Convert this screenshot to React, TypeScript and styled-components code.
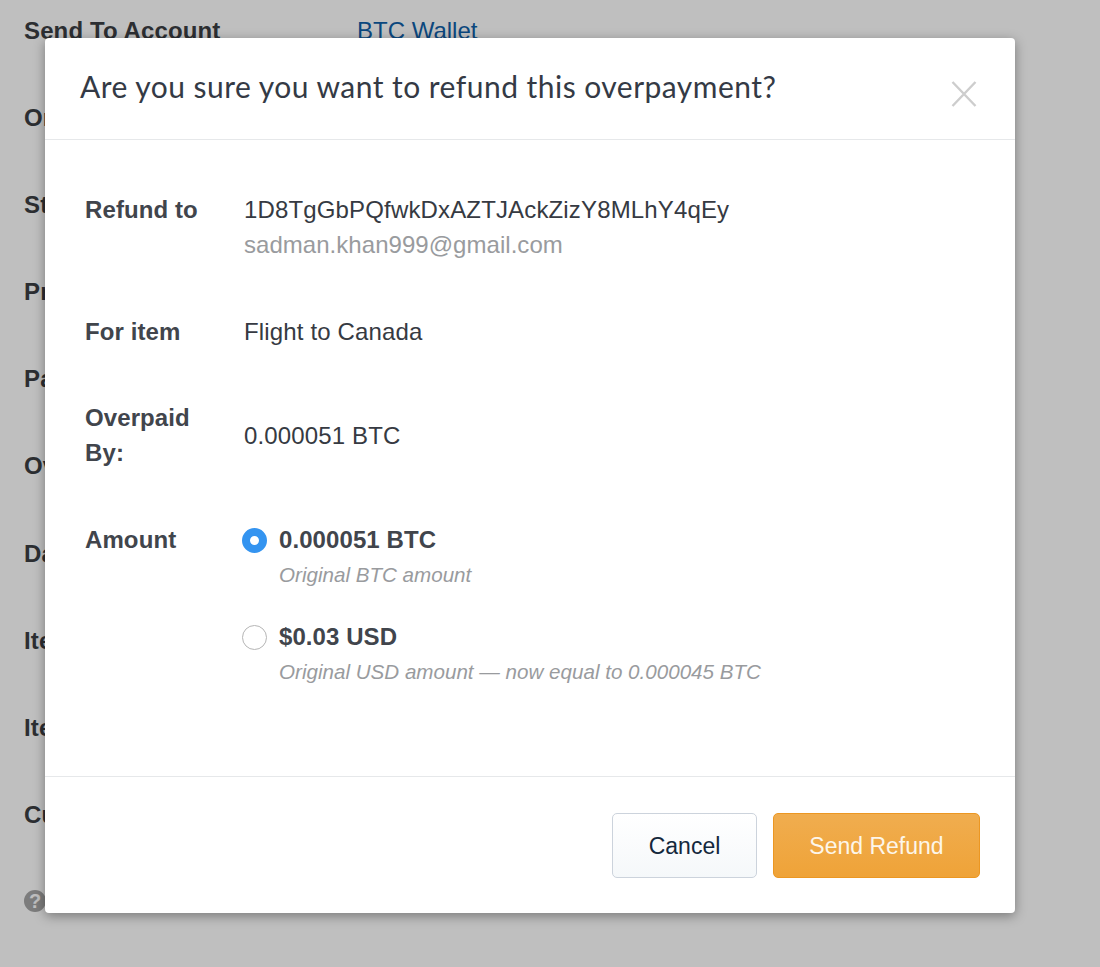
import React from 'react'
import styled, { createGlobalStyle } from 'styled-components'

const GlobalStyle = createGlobalStyle`
  html, body {
    margin: 0;
    padding: 0;
    background: #fff;
    overflow: hidden;
  }
  body {
    font-family: "Liberation Sans", Arial, sans-serif;
  }
`

const Page = styled.div`
  position: relative;
  width: 1100px;
  height: 967px;
  overflow: hidden;
  background: #fff;
`

const DetailList = styled.dl`
  margin: 0;
  padding: 17px 0 0 24px;
  display: flex;
  flex-direction: column;
  gap: 59.1px;
`

const DetailRow = styled.div`
  display: flex;
  height: 28px;
  align-items: center;
  font-size: 24px;
  line-height: 28px;
`

const DetailLabel = styled.dt`
  width: 333px;
  font-weight: 700;
  letter-spacing: 0.12px;
  color: #3b3e43;
`

const DetailValue = styled.dd`
  margin: 0;
  color: #0f5fa8;
`

const HelpRow = styled.div`
  display: flex;
  align-items: center;
  height: 22px;
  margin: 61px 0 0 24px;
`

const HelpIcon = styled.span`
  width: 22px;
  height: 22px;
  border-radius: 50%;
  background: #a6a6a6;
  color: #fff;
  font-size: 20px;
  font-weight: 700;
  line-height: 22px;
  text-align: center;
`

const Overlay = styled.div`
  position: absolute;
  inset: 0;
  background: rgba(0, 0, 0, 0.25);
`

const Modal = styled.div`
  position: absolute;
  left: 45px;
  top: 38px;
  width: 970px;
  height: 875px;
  display: flex;
  flex-direction: column;
  background: #fff;
  border-radius: 4px;
  box-shadow: 0 3px 12px rgba(0, 0, 0, 0.36);
`

const ModalHeader = styled.header`
  flex: none;
  height: 102px;
  box-sizing: border-box;
  border-bottom: 1px solid #e6e8ea;
  padding: 0 35px;
  display: flex;
  justify-content: space-between;
`

const ModalTitle = styled.h2`
  margin: 29px 0 0;
  font-family: "Lato", sans-serif;
  font-size: 30px;
  line-height: 38px;
  font-weight: 400;
  letter-spacing: 0.47px;
  color: #343a45;
`

const CloseButton = styled.button`
  width: 26px;
  height: 26px;
  margin: 43px 3px 0 0;
  padding: 0;
  border: 0;
  background: none;
  display: block;
`

const ModalBody = styled.div`
  flex: 1;
  padding: 52px 40px 0;
  display: flex;
  flex-direction: column;
  gap: 51.5px;
`

const FormRow = styled.div<{ $center?: boolean }>`
  display: grid;
  grid-template-columns: 159px 1fr;
  align-items: ${p => (p.$center ? 'center' : 'start')};
`

const FieldLabel = styled.div`
  max-width: 125px;
  font-size: 24px;
  line-height: 35px;
  font-weight: 700;
  letter-spacing: 0.1px;
  color: #41454c;
`

const FieldValue = styled.div`
  font-size: 24px;
  line-height: 35px;
  letter-spacing: 0.15px;
  color: #363a42;
`

const SubValue = styled.div`
  font-size: 24px;
  line-height: 35px;
  letter-spacing: 0.04px;
  color: #999b9e;
`

const RadioGroup = styled.div`
  display: flex;
  flex-direction: column;
  gap: 30px;
`

const RadioOption = styled.div`
  display: flex;
  gap: 12px;
  margin-left: -2px;
`

const RadioDot = styled.span<{ $checked?: boolean }>`
  flex: none;
  width: 25px;
  height: 25px;
  box-sizing: border-box;
  margin-top: 6px;
  border-radius: 50%;
  background: #fff;
  border: ${p => (p.$checked ? '8px solid #3494f0' : '1px solid #b5b5b5')};
`

const RadioTitle = styled.div`
  font-size: 24px;
  line-height: 35px;
  font-weight: 700;
  letter-spacing: 0.08px;
  color: #41454c;
`

const RadioHint = styled.div`
  margin-top: 4px;
  font-size: 20.6px;
  line-height: 28px;
  font-style: italic;
  color: #999b9e;
`

const ModalFooter = styled.footer`
  flex: none;
  height: 137px;
  box-sizing: border-box;
  border-top: 1px solid #e6e8ea;
  padding: 36px 35px 0;
  display: flex;
  justify-content: flex-end;
  align-items: flex-start;
  gap: 16px;
`

const Button = styled.button<{ $primary?: boolean }>`
  height: 65px;
  width: ${p => (p.$primary ? '207px' : '145px')};
  border-radius: 5px;
  font-family: "Liberation Sans", Arial, sans-serif;
  font-size: 23px;
  padding: 2px 0 0;
  border: 1px solid ${p => (p.$primary ? '#ec9722' : '#ccd3dc')};
  color: ${p => (p.$primary ? '#fdf6ea' : '#14283c')};
  background: ${p =>
    p.$primary
      ? 'linear-gradient(#f0ad4f, #efa338)'
      : 'linear-gradient(#ffffff, #f5f8fa)'};
`

const rows: [string, string][] = [
  ['Send To Account', 'BTC Wallet'],
  ['Order', ''],
  ['Status', ''],
  ['Price', ''],
  ['Paid', ''],
  ['Overpaid', ''],
  ['Date', ''],
  ['Item', ''],
  ['Item', ''],
  ['Customer', ''],
]

const App = () => {
  return (
    <Page>
      <GlobalStyle />
      <DetailList>
        {rows.map(([label, value], index) => (
          <DetailRow key={index}>
            <DetailLabel>{label}</DetailLabel>
            <DetailValue>{value}</DetailValue>
          </DetailRow>
        ))}
      </DetailList>
      <HelpRow>
        <HelpIcon>?</HelpIcon>
      </HelpRow>
      <Overlay />
      <Modal>
        <ModalHeader>
          <ModalTitle>Are you sure you want to refund this overpayment?</ModalTitle>
          <CloseButton aria-label="Close">
            <svg width="26" height="26" viewBox="0 0 26 26">
              <path d="M1.5 1 L24.5 25 M24.5 1 L1.5 25" stroke="#cdcdcd" strokeWidth="2.4" fill="none" />
            </svg>
          </CloseButton>
        </ModalHeader>
        <ModalBody>
          <FormRow>
            <FieldLabel>Refund to</FieldLabel>
            <div>
              <FieldValue>1D8TgGbPQfwkDxAZTJAckZizY8MLhY4qEy</FieldValue>
              <SubValue>sadman.khan999@gmail.com</SubValue>
            </div>
          </FormRow>
          <FormRow>
            <FieldLabel>For item</FieldLabel>
            <FieldValue>Flight to Canada</FieldValue>
          </FormRow>
          <FormRow $center>
            <FieldLabel>Overpaid By:</FieldLabel>
            <FieldValue>0.000051 BTC</FieldValue>
          </FormRow>
          <FormRow>
            <FieldLabel>Amount</FieldLabel>
            <RadioGroup>
              <RadioOption>
                <RadioDot $checked />
                <div>
                  <RadioTitle>0.000051 BTC</RadioTitle>
                  <RadioHint>Original BTC amount</RadioHint>
                </div>
              </RadioOption>
              <RadioOption>
                <RadioDot />
                <div>
                  <RadioTitle>$0.03 USD</RadioTitle>
                  <RadioHint>Original USD amount — now equal to 0.000045 BTC</RadioHint>
                </div>
              </RadioOption>
            </RadioGroup>
          </FormRow>
        </ModalBody>
        <ModalFooter>
          <Button>Cancel</Button>
          <Button $primary>Send Refund</Button>
        </ModalFooter>
      </Modal>
    </Page>
  )
}

export default App
